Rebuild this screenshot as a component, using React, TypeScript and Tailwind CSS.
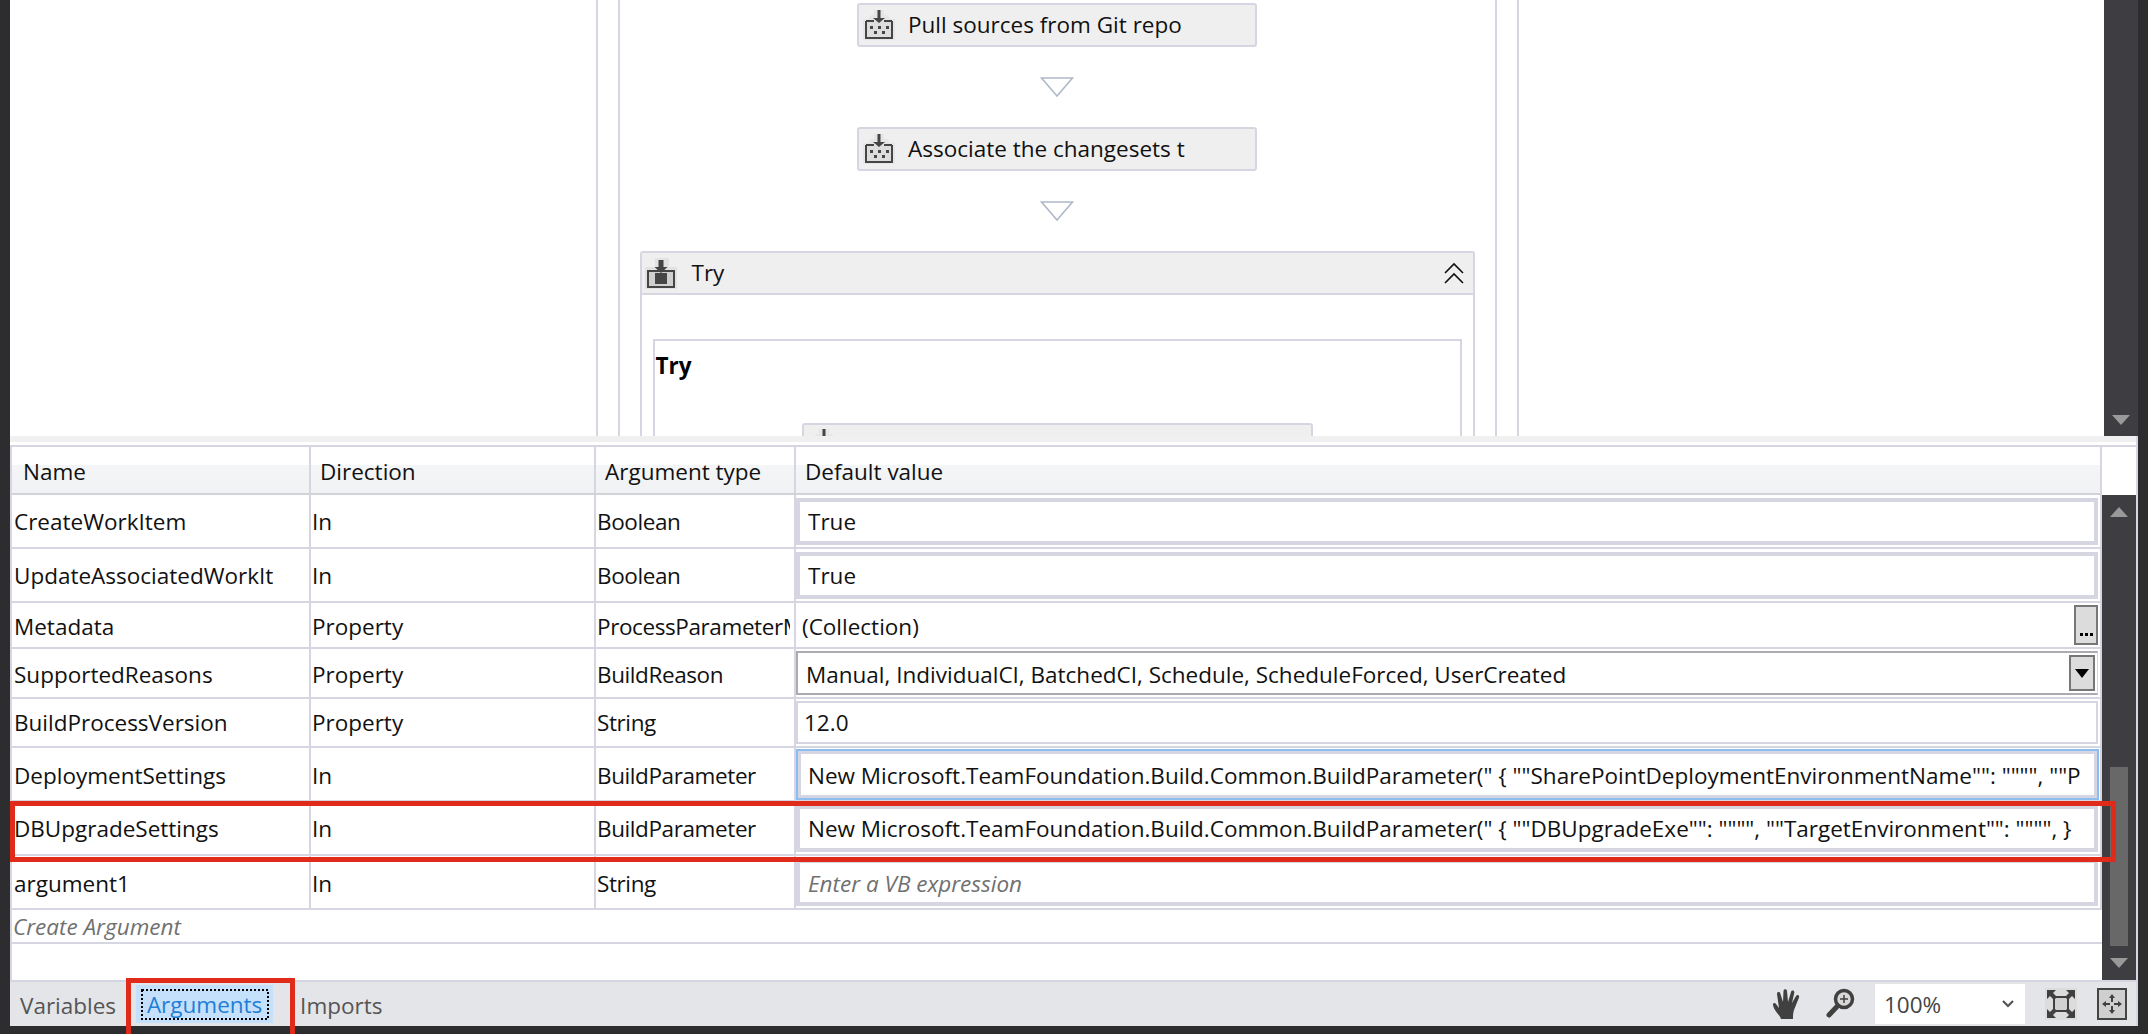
import React from "react";

const line = "border-[#d6d6e2]";

function ActivityIcon({ className }: { className?: string }) {
  return (
    <svg width="32" height="30" viewBox="0 0 32 30" className={`shrink-0 ${className ?? ""}`}>
      <path d="M11 0h10v5h3l3 4h5v21H0V9h5l3-4h3z" fill="#e6e6e6" />
      <rect x="3" y="11" width="26" height="17" fill="#dddddd" />
      <path d="M3 11v17h26V11M3 11h8M21 11h8" stroke="#454545" strokeWidth="2" fill="none" />
      <path d="M14.5 0h3v8h4.500L16 13l-6-5h4.500z" fill="#454545" />
      <path d="M7 16h3v3H7zM15 16h3v3h-3zM23 16h3v3h-3zM11 21h3v3h-3zM19 21h3v3h-3z" fill="#454545" />
    </svg>
  );
}

function TryIcon() {
  return (
    <svg width="32" height="31" viewBox="0 0 32 31" className="shrink-0">
      <path d="M10 0h14v9h8v22H0V9h10z" fill="#e2e2e2" />
      <rect x="3" y="13" width="26" height="16" fill="#cfcfcf" stroke="#454545" strokeWidth="2" />
      <rect x="10" y="15" width="12" height="11" fill="#454545" />
      <path d="M13.500 2h5v7h4L16 15 9.500 9h4z" fill="#454545" />
    </svg>
  );
}

function ActivityCard({ label }: { label: string }) {
  return (
    <div className={`flex h-[44px] w-[400px] shrink-0 items-center gap-[13px] rounded-[3px] border-2 ${line} bg-[#efefef] pl-[4px] text-[#111]`}>
      <ActivityIcon />
      <span className="-mt-[1px] whitespace-nowrap">{label}</span>
    </div>
  );
}

function Connector() {
  return (
    <svg width="34" height="20" viewBox="0 0 34 20" className="my-[30px] shrink-0">
      <path d="M1.500 1h31L17 19z" fill="#fff" stroke="#b0b8c8" strokeWidth="1.600" />
    </svg>
  );
}

function Canvas() {
  return (
    <div className="flex min-w-0 flex-1 justify-center overflow-hidden bg-white">
      <div className={`h-[436px] w-[923px] shrink-0 border-x-2 ${line} px-[20px]`}>
        <div className={`h-full border-x-2 ${line} px-[20px]`}>
          <div className="flex flex-col items-center pt-[3px]">
            <ActivityCard label="Pull sources from Git repo" />
            <Connector />
            <ActivityCard label="Associate the changesets t" />
            <Connector />
            <div className={`w-full rounded-t-[3px] border-x-2 border-t-2 ${line}`}>
              <div className={`flex h-[42px] items-center border-b-2 ${line} bg-[#efefef] pl-[3px] pr-[8px] text-[#111]`}>
                <TryIcon />
                <span className="ml-[15px]">Try</span>
                <svg width="22" height="22" viewBox="0 0 22 22" className="ml-auto">
                  <path d="M2 11 11 2l9 9M2 21l9-9 9 9" fill="none" stroke="#111" strokeWidth="1.600" />
                </svg>
              </div>
              <div className="px-[11px] pt-[44px]">
                <div className={`flex h-[200px] flex-col items-center border-2 ${line}`}>
                  <div className="mt-[10px] h-[30px] self-start pl-[1px] font-bold leading-[30px] text-black">Try</div>
                  <div className={`mt-[42px] flex h-[44px] w-[511px] items-start gap-[12px] rounded-[3px] border-2 ${line} bg-[#efefef] pt-[2px] pl-[4px] text-[#111]`}>
                    <ActivityIcon className="mt-[2px]" />
                    <span className="block h-[9px] overflow-hidden whitespace-nowrap">Compile, Test and Publish</span>
                  </div>
                </div>
              </div>
            </div>
          </div>
        </div>
      </div>
    </div>
  );
}

function Arrow({ up, className }: { up?: boolean; className?: string }) {
  return (
    <svg width="18" height="10" viewBox="0 0 18 10" className={className}>
      <path d={up ? "M9 0l9 10H0z" : "M0 0h18L9 10z"} fill="#999" />
    </svg>
  );
}

type Kind = "box" | "thin" | "focus" | "select" | "collection";

const rows: { name: string; dir: string; type: string; val: string; kind: Kind; h: string; ph?: boolean; drop: string }[] = [
  { name: "CreateWorkItem", dir: "In", type: "Boolean", val: "True", kind: "box", h: "h-[54px]", drop: "pt-[2px]" },
  { name: "UpdateAssociatedWorkIt", dir: "In", type: "Boolean", val: "True", kind: "box", h: "h-[54px]", drop: "pt-[2px]" },
  { name: "Metadata", dir: "Property", type: "ProcessParameterM", val: "(Collection)", kind: "collection", h: "h-[46px]", drop: "pt-[3px]" },
  { name: "SupportedReasons", dir: "Property", type: "BuildReason", val: "Manual, IndividualCI, BatchedCI, Schedule, ScheduleForced, UserCreated", kind: "select", h: "h-[50px]", drop: "pt-[3px]" },
  { name: "BuildProcessVersion", dir: "Property", type: "String", val: "12.0", kind: "thin", h: "h-[49px]", drop: "pt-0" },
  { name: "DeploymentSettings", dir: "In", type: "BuildParameter", val: 'New Microsoft.TeamFoundation.Build.Common.BuildParameter(" { ""SharePointDeploymentEnvironmentName"": """", ""P', kind: "focus", h: "h-[54px]", drop: "pt-[3px]" },
  { name: "DBUpgradeSettings", dir: "In", type: "BuildParameter", val: 'New Microsoft.TeamFoundation.Build.Common.BuildParameter(" { ""DBUpgradeExe"": """", ""TargetEnvironment"": """", }', kind: "box", h: "h-[54px]", drop: "pt-[2px]" },
  { name: "argument1", dir: "In", type: "String", val: "Enter a VB expression", kind: "box", h: "h-[54px]", ph: true, drop: "pt-[3px]" },
];

function ValueCell({ val, kind, ph, drop }: { val: string; kind: Kind; ph?: boolean; drop: string }) {
  const text = `overflow-hidden whitespace-nowrap ${drop} ${ph ? "italic text-[#707070]" : ""}`;
  if (kind === "collection") {
    return (
      <div className="flex h-full items-center justify-between pr-[2px] pl-[6px]">
        <span className={drop}>{val}</span>
        <div className="flex h-[40px] w-[24px] items-end justify-center border-2 border-[#777] bg-[#dcdcdc] pb-[7px]">
          <span className="flex gap-[2px]">
            <i className="block h-[3px] w-[3px] bg-black" />
            <i className="block h-[3px] w-[3px] bg-black" />
            <i className="block h-[3px] w-[3px] bg-black" />
          </span>
        </div>
      </div>
    );
  }
  if (kind === "select") {
    return (
      <div className="flex h-full items-center py-[2px] pr-[2px]">
        <div className="flex h-full w-full items-center border-y-2 border-l-2 border-r border-[#ababb3] border-r-[#d6d6e2] pl-[8px] pr-[2px]">
          <span className={`min-w-0 flex-1 ${text}`}>{val}</span>
          <div className="flex h-[36px] w-[26px] shrink-0 items-center justify-center border-2 border-[#777] bg-[#dcdcdc]">
            <svg width="14" height="9" viewBox="0 0 14 9"><path d="M0 0h14L7 9z" fill="#000" /></svg>
          </div>
        </div>
      </div>
    );
  }
  if (kind === "thin") {
    return (
      <div className="flex h-full items-center py-[2px] pr-[2px]">
        <div className={`flex h-[43px] w-full items-center border-2 ${line} pl-[6px]`}>
          <span className={text}>{val}</span>
        </div>
      </div>
    );
  }
  if (kind === "focus") {
    return (
      <div className="flex h-full items-center pr-[1px]">
        <div className="h-[51px] w-full border-2 border-[#8cbdf0]">
          <div className={`flex h-full items-center border-[3px] ${line} pl-[7px]`}>
            <span className={text}>{val}</span>
          </div>
        </div>
      </div>
    );
  }
  return (
    <div className="flex h-full items-center pr-[2px]">
      <div className={`flex h-[47px] w-full items-center border-4 ${line} pl-[8px]`}>
        <span className={text}>{val}</span>
      </div>
    </div>
  );
}

function Table() {
  const c1 = `w-[299px] shrink-0 border-r-2 ${line}`;
  const c2 = `w-[285px] shrink-0 border-r-2 ${line}`;
  const c3 = `w-[200px] shrink-0 border-r-2 ${line}`;
  return (
    <div className={`flex min-w-0 flex-1 flex-col border-l-2 ${line}`}>
      <div className="flex h-[48px] border-b-2 border-[#d2d2d8] bg-[linear-gradient(#ffffff_0,#ffffff_40%,#f4f5f7_40%,#f1f2f4_100%)]">
        <div className={`${c1} flex items-center pt-[3px] pl-[11px]`}>Name</div>
        <div className={`${c2} flex items-center pt-[3px] pl-[9px]`}>Direction</div>
        <div className={`${c3} flex items-center pt-[3px] pl-[9px]`}>Argument type</div>
        <div className={`flex flex-1 items-center border-r-2 ${line} pt-[3px] pl-[9px]`}>Default value</div>
      </div>
      {rows.map((r) => (
        <div key={r.name} className={`flex ${r.h} border-b-2 ${line}`}>
          <div className={`${c1} flex items-center overflow-hidden ${r.drop} pl-[2px]`}>
            <span className="block max-w-[262px] overflow-hidden whitespace-nowrap">{r.name}</span>
          </div>
          <div className={`${c2} flex items-center ${r.drop} pl-[1px]`}>{r.dir}</div>
          <div className={`${c3} flex items-center overflow-hidden ${r.drop} pl-[1px]`}>
            <span className="block max-w-[193px] overflow-hidden whitespace-nowrap tracking-[-0.4px]">{r.type}</span>
          </div>
          <div className={`min-w-0 flex-1 border-r-2 ${line}`}>
            <ValueCell val={r.val} kind={r.kind} ph={r.ph} drop={r.drop} />
          </div>
        </div>
      ))}
      <div className={`flex h-[34px] items-center border-b-2 ${line} pt-[1px] pl-[1px] italic text-[#707070]`}>Create Argument</div>
    </div>
  );
}

function BottomBar() {
  return (
    <div className={`flex h-[46px] shrink-0 items-center border-t-2 ${line} bg-[#e4e5e8] pr-[9px] pl-[10px]`}>
      <span className="pt-[3px] text-[#555]">Variables</span>
      <div className="ml-[20px] flex h-[38px] w-[137px] shrink-0 items-center justify-center bg-[#c5e0fb] text-[#1f7ed6]">
        <div className="relative flex h-[31px] w-[128px] items-center justify-center pt-[2px]">
          Arguments
          <svg width="128" height="31" viewBox="0 0 128 31" className="absolute inset-0">
            <rect x="1" y="1" width="126" height="29" fill="none" stroke="#000" strokeWidth="2" strokeDasharray="2 2" />
          </svg>
        </div>
      </div>
      <span className="ml-[27px] pt-[3px] text-[#555]">Imports</span>
      <div className="ml-auto flex items-center">
        <svg width="30" height="32" viewBox="0 0 30 32">
          <path d="M9 31c-1-4-7-8-8-14-.4-2 2-3 3-1l3 4L5 6c-.3-2 2.600-3 3.300-.6L11 14 11.500 3c.1-2.500 3.300-2.500 3.500 0l1 11 3-10c.7-2.300 3.700-1.700 3.300.7L20 15l4-7c1.200-2 3.800-.7 3 1.500L22 22c-1 3-1 6-1 9z" fill="#404040" />
        </svg>
        <svg width="30" height="32" viewBox="0 0 30 32" className="ml-[23px]">
          <circle cx="19" cy="11" r="8.500" fill="#d8d8d8" stroke="#404040" strokeWidth="3.500" />
          <path d="M12.500 18 4 27" stroke="#404040" strokeWidth="5" strokeLinecap="round" />
          <path d="M19 7v8M15 11h8" stroke="#404040" strokeWidth="1.500" />
        </svg>
        <div className="ml-[20px] flex h-[40px] w-[150px] items-center justify-between bg-white pl-[9px] pr-[10px] text-[#444]">
          <span className="pt-[2px]">100%</span>
          <svg width="14" height="10" viewBox="0 0 14 10"><path d="M2 2l5 5 5-5" fill="none" stroke="#555" strokeWidth="2.200" /></svg>
        </div>
        <svg width="32" height="32" viewBox="0 0 32 32" className="ml-[20px]">
          <rect x="0" y="0" width="32" height="32" fill="#dcdcdc" />
          <rect x="9" y="9" width="14" height="14" fill="#d0d0d0" stroke="#404040" strokeWidth="2" />
          <path d="M2 2h9l-3 3 4 4-3 3-4-4-3 3zM30 2v9l-3-3-4 4-3-3 4-4-3-3zM2 30v-9l3 3 4-4 3 3-4 4 3 3zM30 30h-9l3-3-4-4 3-3 4 4 3-3z" fill="#404040" />
        </svg>
        <div className="ml-[20px] flex h-[32px] w-[30px] items-center justify-center border-2 border-[#444] bg-[#cfcfcf]">
          <svg width="24" height="24" viewBox="0 0 24 24">
            <path d="M12 2l3 4h-2v4h-2V6H9zM12 22l-3-4h2v-4h2v4h2zM2 12l4-3v2h4v2H6v2zM22 12l-4 3v-2h-4v-2h4V9z" fill="#404040" />
          </svg>
        </div>
      </div>
    </div>
  );
}

export default function App() {
  return (
    <div className="relative flex h-[1034px] flex-col overflow-hidden bg-[#2d2d30] px-[10px] pb-[8px] text-[22.5px] text-[#111] [font-family:'Open_Sans',sans-serif]">
      <div className="flex h-[436px] shrink-0">
        <Canvas />
        <div className="flex w-[34px] shrink-0 items-end justify-center bg-[#3e3e42] pb-[11px]">
          <Arrow />
        </div>
      </div>
      <div className="flex min-h-0 flex-1 flex-col border-r-2 border-[#d6d6e2] bg-white">
        <div className="h-[6px] shrink-0 bg-[#f0f0f0]" />
        <div className="h-[3px] shrink-0" />
        <div className={`flex min-h-0 flex-1 border-t-2 ${line}`}>
          <Table />
          <div className="flex w-[34px] shrink-0 flex-col">
            <div className="h-[48px] shrink-0" />
            <div className="flex flex-1 flex-col items-center bg-[#3e3e42] pt-[12px] pb-[12px]">
              <Arrow up />
              <div className="mt-[250px] h-[179px] w-[18px] bg-[#686868]" />
              <Arrow className="mt-auto" />
            </div>
          </div>
        </div>
        <BottomBar />
      </div>
      <div className="absolute top-[801px] left-[10px] h-[61px] w-[2106px] border-[5px] border-[#e02a1a]" />
      <div className="absolute top-[978px] left-[126px] h-[70px] w-[169px] border-[5px] border-[#e02a1a]" />
    </div>
  );
}
